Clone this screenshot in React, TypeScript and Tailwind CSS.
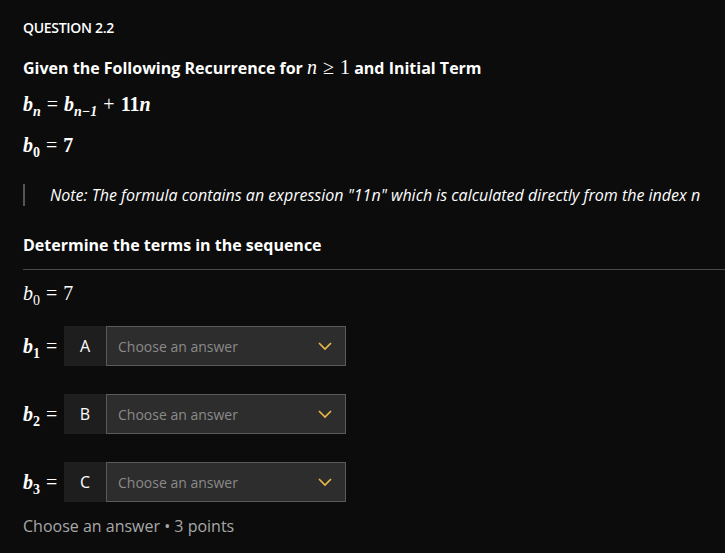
import React from "react";

const serif = "font-['Liberation_Serif',serif]";

function Sub({ children, italic = false }: { children: React.ReactNode; italic?: boolean }) {
  return (
    <span className={`text-[14px] relative top-[5px] leading-none ${italic ? "italic" : "not-italic"}`}>{children}</span>
  );
}

function B({ sub, subItalic = false, bold = false }: { sub: React.ReactNode; subItalic?: boolean; bold?: boolean }) {
  return (
    <span className={`${serif} ${bold ? "font-bold" : "font-normal"}`}>
      <span className="italic">b</span>
      <Sub italic={subItalic}>{sub}</Sub>
    </span>
  );
}

function Eq() {
  return <span className={`${serif} font-normal mx-[6px]`}>=</span>;
}

function AnswerRow({ term, letter }: { term: string; letter: string }) {
  return (
    <div className="flex items-center h-[40px]">
      <span className="text-[20px] w-[41px] flex items-center whitespace-nowrap">
        <B sub={term} bold />
        <Eq />
      </span>
      <div className="h-full w-[42px] bg-[#1e1e1e] flex items-center justify-center text-[16px] text-white">{letter}</div>
      <div className="h-full w-[240px] bg-[#2d2d2d] border border-[#5a5a5a] flex items-center justify-between pl-[11px] pr-[12px]">
        <span className="text-[14px] text-[#8a8a8a]">Choose an answer</span>
        <svg width="16" height="10" viewBox="0 0 16 10" fill="none">
          <path d="M2 2l6 6 6-6" stroke="#e8b84a" strokeWidth="1.7" />
        </svg>
      </div>
    </div>
  );
}

export default function App() {
  return (
    <div className="min-h-screen bg-[#0c0c0c] text-white font-['Open_Sans',sans-serif] pl-[23px] pt-[19px]">
      <div className="text-[14px] font-semibold tracking-[-0.3px] leading-[18px]">QUESTION 2.2</div>

      <div className="mt-[18px] text-[16px] font-bold flex items-baseline leading-[24px]">
        Given the Following Recurrence for&nbsp;
        <span className={`${serif} italic font-normal text-[20px]`}>n</span>
        <span className={`${serif} font-normal text-[20px] mx-[6px]`}>≥</span>
        <span className={`${serif} font-normal text-[20px]`}>1</span>
        &nbsp;and Initial Term
      </div>

      <div className="mt-[11px] text-[20px] leading-[26px]">
        <B sub="n" subItalic bold />
        <Eq />
        <B sub="n−1" subItalic bold />
        <span className={`${serif} mx-[6px]`}>+</span>
        <span className={`${serif} font-bold`}>11</span>
        <span className={`${serif} font-bold italic`}>n</span>
      </div>

      <div className="mt-[15px] text-[20px] leading-[26px]">
        <B sub="0" bold />
        <Eq />
        <span className={`${serif} font-bold`}>7</span>
      </div>

      <div className="mt-[26px] border-l-2 border-[#555] pl-[25px] py-[1px] text-[16px] italic leading-[20px]">
        Note: The formula contains an expression "11n" which is calculated directly from the index n
      </div>

      <div className="mt-[27px] text-[16px] font-bold leading-[24px]">Determine the terms in the sequence</div>

      <div className="mt-[12px] h-px bg-[#4a4a4a]" />

      <div className="mt-[10px] text-[20px] leading-[26px]">
        <B sub="0" />
        <Eq />
        <span className={serif}>7</span>
      </div>

      <div className="mt-[20px] flex flex-col gap-[28px]">
        <AnswerRow term="1" letter="A" />
        <AnswerRow term="2" letter="B" />
        <AnswerRow term="3" letter="C" />
      </div>

      <div className="mt-[13px] text-[16px] text-[#a8a8a8] leading-[22px]">Choose an answer • 3 points</div>
    </div>
  );
}
